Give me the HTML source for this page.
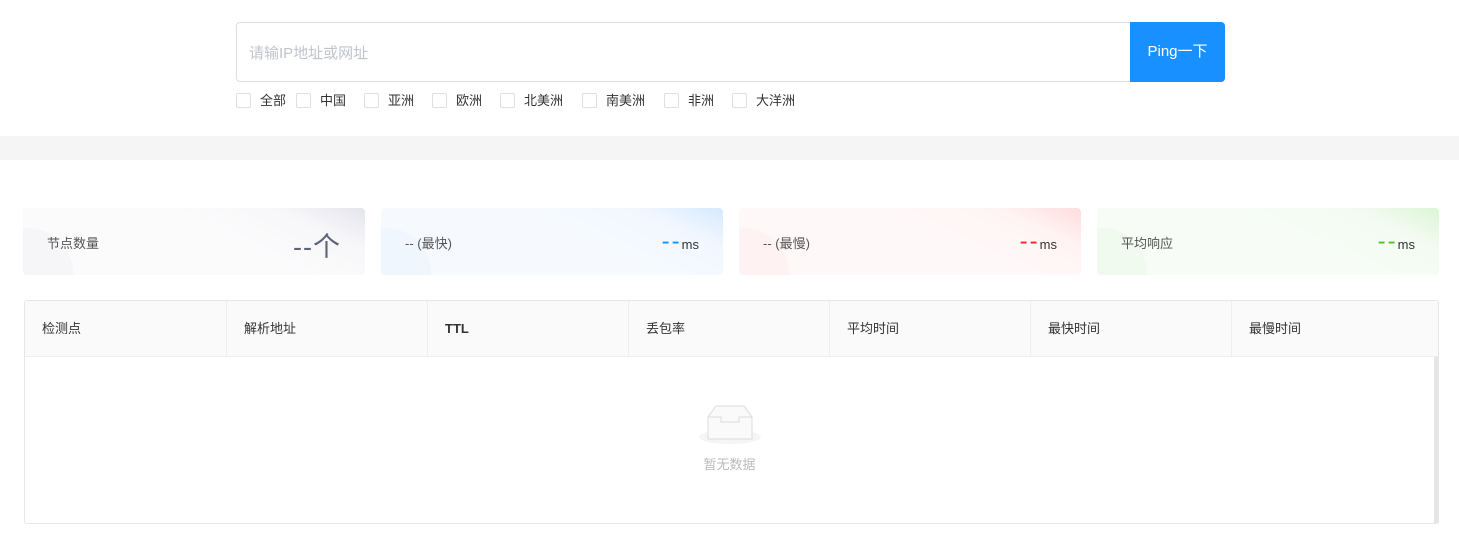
<!DOCTYPE html>
<html><head><meta charset="utf-8"><style>
*{margin:0;padding:0;box-sizing:border-box}
body{width:1459px;height:548px;background:#fff;font-family:"Liberation Sans","Noto Sans CJK SC",sans-serif;color:#333;position:relative;overflow:hidden}
.abs{position:absolute}
.input{left:236px;top:22px;width:895px;height:60px;border:1px solid #dcdfe6;border-right:none;border-radius:4px 0 0 4px;color:#c0c4cc;font-size:15px;line-height:62px;padding-left:12px}
.btn{left:1130px;top:22px;width:95px;height:60px;background:#1890ff;color:#fff;font-size:15px;line-height:60px;text-align:center;border-radius:0 4px 4px 0}
.cb{top:93px;width:15px;height:15px;border:1px solid #dcdfe6;border-radius:2px;background:#fff}
.lb{top:92px;font-size:13px;color:#333;line-height:18px}
.band{left:0;top:136px;width:1459px;height:24px;background:#f5f5f5}
.card{top:208px;width:342px;height:67px;border-radius:4px;overflow:hidden}
.card .t{position:absolute;left:24px;top:25px;font-size:13px;color:#555}
.card .v{position:absolute;right:24px;top:20px;font-size:24px;letter-spacing:2px}
.card .v small{font-size:13px;letter-spacing:0}
.circ{position:absolute;left:-40px;top:20px;width:90px;height:90px;border-radius:50%}
.tbl{left:24px;top:300px;width:1415px;height:224px;border:1px solid #e6e6e6;border-radius:3px}
.th{position:absolute;top:0;height:56px;background:#fafafa;border-right:1px solid #eee;border-bottom:1px solid #eee;font-size:13px;line-height:56px;padding-left:17px;color:#333}
</style></head><body>
<div class="abs input">请输IP地址或网址</div>
<div class="abs btn">Ping一下</div>
<div class="abs cb" style="left:236px"></div><div class="abs lb" style="left:260px">全部</div>
<div class="abs cb" style="left:296px"></div><div class="abs lb" style="left:320px">中国</div>
<div class="abs cb" style="left:364px"></div><div class="abs lb" style="left:388px">亚洲</div>
<div class="abs cb" style="left:432px"></div><div class="abs lb" style="left:456px">欧洲</div>
<div class="abs cb" style="left:500px"></div><div class="abs lb" style="left:524px">北美洲</div>
<div class="abs cb" style="left:582px"></div><div class="abs lb" style="left:606px">南美洲</div>
<div class="abs cb" style="left:664px"></div><div class="abs lb" style="left:688px">非洲</div>
<div class="abs cb" style="left:732px"></div><div class="abs lb" style="left:756px">大洋洲</div>
<div class="abs band"></div>

<div class="abs card" style="left:23px;background:linear-gradient(205deg,#e4e4ec 0%,#f7f7f9 18%,#fbfbfc 40%)"><div class="circ" style="background:#f6f6f8"></div><div class="t">节点数量</div><div class="v" style="color:#5c6478;top:17px;font-size:27px;letter-spacing:1px">--个</div></div>
<div class="abs card" style="left:381px;background:linear-gradient(205deg,#d6e9ff 0%,#f1f7ff 18%,#f6faff 40%)"><div class="circ" style="background:#f0f6fe"></div><div class="t">-- (最快)</div><div class="v" style="color:#1890ff">--<small style="color:#333">ms</small></div></div>
<div class="abs card" style="left:739px;background:linear-gradient(205deg,#ffdcdc 0%,#fff4f4 18%,#fff8f8 40%)"><div class="circ" style="background:#fff2f2"></div><div class="t">-- (最慢)</div><div class="v" style="color:#f5222d">--<small style="color:#333">ms</small></div></div>
<div class="abs card" style="left:1097px;background:linear-gradient(205deg,#dcf5d6 0%,#f3fbf1 18%,#f7fcf6 40%)"><div class="circ" style="background:#f1faee"></div><div class="t">平均响应</div><div class="v" style="color:#52c41a">--<small style="color:#333">ms</small></div></div>

<div class="abs tbl">
<div class="th" style="left:0;width:202px">检测点</div>
<div class="th" style="left:202px;width:201px">解析地址</div>
<div class="th" style="left:403px;width:201px;font-weight:bold">TTL</div>
<div class="th" style="left:604px;width:201px">丢包率</div>
<div class="th" style="left:805px;width:201px">平均时间</div>
<div class="th" style="left:1006px;width:201px">最快时间</div>
<div class="th" style="left:1207px;width:206px;border-right:none">最慢时间</div>
<div style="position:absolute;left:1409px;top:56px;width:4px;height:166px;background:#e6e6e6"></div>
<svg style="position:absolute;left:672px;top:102px" width="66" height="44" viewBox="0 0 66 44">
<ellipse cx="33" cy="34" rx="31" ry="7" fill="#f5f5f5"/>
<path d="M11 14 L19 3 H47 L55 14 V36 H11 Z" fill="#fafafa" stroke="#dcdcdc" stroke-width="1"/>
<path d="M11 14 H24 V19 H42 V14 H55" fill="none" stroke="#dcdcdc" stroke-width="1"/>
</svg>
<div style="position:absolute;left:0;width:1409px;top:153px;text-align:center;font-size:13px;color:#bbb">暂无数据</div>
</div>
</body></html>
